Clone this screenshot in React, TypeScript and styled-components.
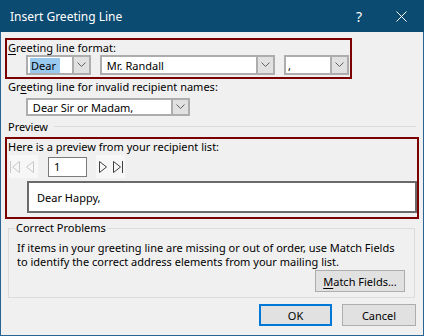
import React from "react";
import styled, { createGlobalStyle } from "styled-components";

const GlobalStyle = createGlobalStyle`
    html, body {
        margin: 0;
        padding: 0;
        background: #f0f0f0;
    }
    * {
        box-sizing: border-box;
    }
`;

const FONT = `"Noto Sans", "Open Sans", sans-serif`;

const Window = styled.div`
    width: 424px;
    height: 336px;
    display: flex;
    flex-direction: column;
    font-family: ${FONT};
    font-size: 11px;
    color: #000;
    background: #f0f0f0;
`;

const TitleBar = styled.div`
    height: 32px;
    flex: none;
    background: #0b4a71;
    color: #fff;
    display: flex;
    align-items: center;
    padding-left: 10px;
    font-size: 12px;
`;

const Title = styled.div`
    flex: 1;
`;

const TitleButton = styled.div<{ $w: number }>`
    width: ${p => p.$w}px;
    height: 32px;
    display: flex;
    align-items: center;
    justify-content: center;
    font-size: 14px;
`;

const Body = styled.div`
    flex: 1;
    border: 1px solid #2a6494;
    border-top: none;
    display: flex;
    flex-direction: column;
    padding-top: 6px;
`;

const RedBox = styled.div<{ $w: number }>`
    width: ${p => p.$w}px;
    margin-left: 4px;
    border: 2px solid #7d0000;
    padding: 0 0 0 1px;
    display: flex;
    flex-direction: column;
`;

const Label = styled.div<{ $h?: number }>`
    height: ${p => p.$h ?? 16}px;
    line-height: ${p => p.$h ?? 16}px;
    white-space: nowrap;
`;

const Row = styled.div<{ $gap?: number; $indent?: number }>`
    display: flex;
    align-items: center;
    gap: ${p => p.$gap ?? 0}px;
    padding-left: ${p => p.$indent ?? 0}px;
`;

const ComboBox = styled.div<{ $w: number; $h: number }>`
    width: ${p => p.$w}px;
    height: ${p => p.$h}px;
    border: 2px solid #adadad;
    background: #fff;
    display: flex;
`;

const ComboText = styled.div`
    flex: 1;
    display: flex;
    align-items: center;
    padding-left: 2px;
    overflow: hidden;
    white-space: nowrap;
`;

const Selected = styled.span`
    background: #99c9ef;
    padding: 0 4px 0 1px;
    line-height: 15px;
`;

const ComboButton = styled.div`
    width: 17px;
    flex: none;
    background: #e1e1e1;
    border-left: 2px solid #adadad;
    display: flex;
    align-items: center;
    justify-content: center;
`;

const Chevron = () => (
    <svg width="9" height="6" viewBox="0 0 9 6">
        <path d="M0.5 0.5 L4.5 4.5 L8.5 0.5" fill="none" stroke="#606060" strokeWidth="1" />
    </svg>
);

const Combo = ({ w, h, children }: { w: number; h: number; children: React.ReactNode }) => (
    <ComboBox $w={w} $h={h}>
        <ComboText>{children}</ComboText>
        <ComboButton><Chevron /></ComboButton>
    </ComboBox>
);

const Plain = styled.div`
    margin-left: 7px;
`;

const SectionHead = styled.div`
    display: flex;
    align-items: center;
    margin: 2px 7px 0 7px;
    height: 16px;
    gap: 6px;
`;

const Rule = styled.div`
    flex: 1;
    height: 1px;
    background: #dcdcdc;
`;

const NavPair = styled.div`
    width: 29px;
    height: 23px;
    background: #f7f7f7;
    display: flex;
    align-items: center;
    justify-content: space-around;
`;

const NumberInput = styled.div`
    width: 39px;
    height: 20px;
    border: 1px solid #7a7a7a;
    background: #fff;
    display: flex;
    align-items: center;
    padding-left: 5px;
    margin: 0 9px 0 10px;
`;

const PreviewBox = styled.div`
    width: 390px;
    height: 32px;
    margin: 3px 0 0 19px;
    border: 2px solid #6a6a6a;
    background: #fff;
    display: flex;
    align-items: center;
    padding-left: 8px;
`;

const Group = styled.fieldset`
    margin: 2px 0 0 7px;
    width: 407px;
    height: 77px;
    border: 1px solid #dcdcdc;
    padding: 0 8px;
    display: flex;
    flex-direction: column;
    min-width: 0;
`;

const Legend = styled.legend`
    padding: 0 1px;
    margin-left: -2px;
    line-height: 14px;
`;

const GroupText = styled.div`
    line-height: 14px;
    margin-top: 6px;
    white-space: nowrap;
`;

const Button = styled.div<{ $w: number; $primary?: boolean }>`
    width: ${p => p.$w}px;
    height: 22px;
    background: #e1e1e1;
    border: ${p => (p.$primary ? "2px solid #0078d7" : "1px solid #adadad")};
    display: flex;
    align-items: center;
    justify-content: center;
`;

const ButtonRow = styled.div<{ $top: number; $right: number }>`
    display: flex;
    justify-content: flex-end;
    gap: 10px;
    margin-top: ${p => p.$top}px;
    margin-right: ${p => p.$right}px;
`;

const Key = styled.span`
    text-decoration: underline;
    text-underline-offset: 2px;
`;

const NavIcon = ({ dir, bar, color }: { dir: "left" | "right"; bar?: boolean; color: string }) => {
    const tri = dir === "left" ? "M8.5 0.5 L1.5 6 L8.5 11.5 Z" : "M1.5 0.5 L8.5 6 L1.5 11.5 Z";
    return (
        <svg width="11" height="12" viewBox="0 0 11 12" style={{ overflow: "visible" }}>
            <path d={tri} fill="none" stroke={color} strokeWidth="1" />
            {bar && (dir === "left"
                ? <line x1="-0.5" y1="0" x2="-0.5" y2="12" stroke={color} strokeWidth="1" />
                : <line x1="10.5" y1="0" x2="10.5" y2="12" stroke={color} strokeWidth="1" />)}
        </svg>
    );
};

export default function App() {
    return (
        <>
            <GlobalStyle />
            <Window>
                <TitleBar>
                    <Title>Insert Greeting Line</Title>
                    <TitleButton $w={38}>?</TitleButton>
                    <TitleButton $w={46}>
                        <svg width="11" height="11" viewBox="0 0 11 11">
                            <path d="M0.5 0.5 L10.5 10.5 M10.5 0.5 L0.5 10.5" stroke="#fff" strokeWidth="1" />
                        </svg>
                    </TitleButton>
                </TitleBar>
                <Body>
                    <RedBox $w={347}>
                        <Label $h={15}><Key>G</Key>reeting line format:</Label>
                        <Row $gap={9} $indent={18}>
                            <Combo w={65} h={20}><Selected>Dear</Selected></Combo>
                            <Combo w={175} h={20}>&nbsp;Mr. Randall</Combo>
                            <Combo w={65} h={20}>,</Combo>
                        </Row>
                        <div style={{ height: 2 }} />
                    </RedBox>
                    <Plain>
                        <Label $h={16}>Gr<Key>e</Key>eting line for invalid recipient names:</Label>
                        <Row $indent={18} style={{ marginTop: 3 }}>
                            <Combo w={164} h={18}>&nbsp;Dear Sir or Madam,</Combo>
                        </Row>
                    </Plain>
                    <SectionHead>
                        <span>Preview</span>
                        <Rule />
                    </SectionHead>
                    <RedBox $w={414} style={{ marginTop: 3 }}>
                        <Label $h={16}>Here is a preview from your recipient list:</Label>
                        <Row style={{ marginLeft: 1 }}>
                            <NavPair>
                                <NavIcon dir="left" bar color="#c8c8c8" />
                                <NavIcon dir="left" color="#c8c8c8" />
                            </NavPair>
                            <NumberInput>1</NumberInput>
                            <NavPair>
                                <NavIcon dir="right" color="#404040" />
                                <NavIcon dir="right" bar color="#404040" />
                            </NavPair>
                        </Row>
                        <PreviewBox>Dear Happy,</PreviewBox>
                        <div style={{ height: 4 }} />
                    </RedBox>
                    <Group>
                        <Legend>Correct Problems</Legend>
                        <GroupText>
                            If items in your greeting line are missing or out of order, use Match Fields
                            <br />
                            to identify the correct address elements from your mailing list.
                        </GroupText>
                        <ButtonRow $top={1} $right={1}>
                            <Button $w={90}><Key>M</Key>atch Fields...</Button>
                        </ButtonRow>
                    </Group>
                    <ButtonRow $top={6} $right={7}>
                        <Button $w={73} $primary>OK</Button>
                        <Button $w={74}>Cancel</Button>
                    </ButtonRow>
                </Body>
            </Window>
        </>
    );
}
